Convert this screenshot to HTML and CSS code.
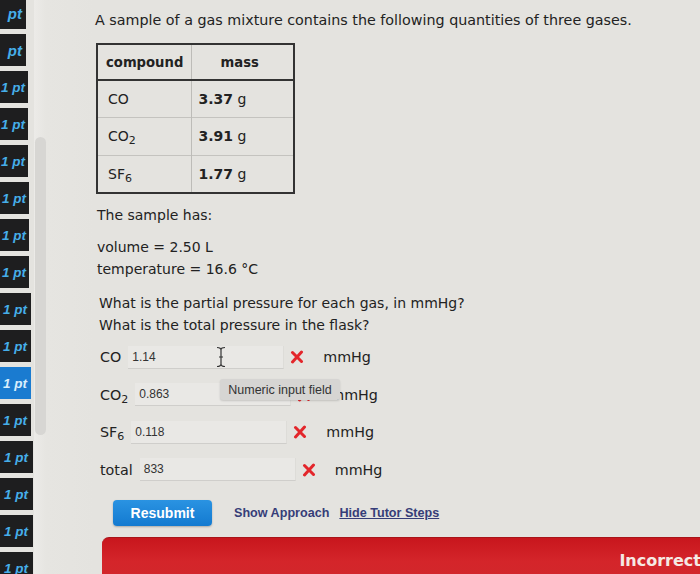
FILE: index.html
```html
<!DOCTYPE html>
<html>
<head>
<meta charset="utf-8">
<link rel="stylesheet" href="styles.css">
</head>
<body>
<div class="page">
  <aside class="rail">
    <div class="tile w1"><span>pt</span></div>
    <div class="tile w1"><span>pt</span></div>
    <div class="tile w2"><span>1 pt</span></div>
    <div class="tile w2"><span>1 pt</span></div>
    <div class="tile w2"><span>1 pt</span></div>
    <div class="tile w3"><span>1 pt</span></div>
    <div class="tile w3"><span>1 pt</span></div>
    <div class="tile w3"><span>1 pt</span></div>
    <div class="tile w4"><span>1 pt</span></div>
    <div class="tile w4"><span>1 pt</span></div>
    <div class="tile w4 active"><span>1 pt</span></div>
    <div class="tile w4"><span>1 pt</span></div>
    <div class="tile w5"><span>1 pt</span></div>
    <div class="tile w5"><span>1 pt</span></div>
    <div class="tile w5"><span>1 pt</span></div>
    <div class="tile w5"><span>1 pt</span></div>
  </aside>
  <div class="gutter"><div class="thumb"></div></div>
  <main class="content">
    <p class="title">A sample of a gas mixture contains the following quantities of three gases.</p>
    <table class="data">
      <thead>
        <tr><th class="c1">compound</th><th class="c2">mass</th></tr>
      </thead>
      <tbody>
        <tr><td>CO</td><td><b>3.37</b> g</td></tr>
        <tr><td>CO<sub>2</sub></td><td><b>3.91</b> g</td></tr>
        <tr><td>SF<sub>6</sub></td><td><b>1.77</b> g</td></tr>
      </tbody>
    </table>
    <p class="para first">The sample has:</p>
    <p class="para gap">volume = 2.50 L</p>
    <p class="para">temperature = 16.6 °C</p>
    <p class="para q gap2">What is the partial pressure for each gas, in mmHg?</p>
    <p class="para q">What is the total pressure in the flask?</p>
    <div class="answers">
      <div class="arow">
        <span class="lbl">CO</span>
        <span class="field">1.14<svg class="ibeam" width="10" height="22" viewBox="0 0 10 22"><path d="M1 1.5 Q5 1.5 5 4 Q5 1.5 9 1.5 M5 4 V18 M1 20.5 Q5 20.5 5 18 Q5 20.5 9 20.5 M3 11 H7" fill="none" stroke="#333" stroke-width="1.2"/></svg></span>
        <svg class="xm" width="14" height="14" viewBox="0 0 14 14"><path d="M2.5 2.5 L11.5 11.5 M11.5 2 L2.5 12" stroke="#e3262b" stroke-width="3" stroke-linecap="round"/></svg>
        <span class="unit">mmHg</span>
      </div>
      <div class="arow">
        <span class="lbl">CO<sub>2</sub></span>
        <span class="field">0.863</span>
        <svg class="xm" width="14" height="14" viewBox="0 0 14 14"><path d="M2.5 2.5 L11.5 11.5 M11.5 2 L2.5 12" stroke="#e3262b" stroke-width="3" stroke-linecap="round"/></svg>
        <span class="unit">mmHg</span>
        <span class="tooltip">Numeric input field</span>
      </div>
      <div class="arow">
        <span class="lbl">SF<sub>6</sub></span>
        <span class="field">0.118</span>
        <svg class="xm" width="14" height="14" viewBox="0 0 14 14"><path d="M2.5 2.5 L11.5 11.5 M11.5 2 L2.5 12" stroke="#e3262b" stroke-width="3" stroke-linecap="round"/></svg>
        <span class="unit">mmHg</span>
      </div>
      <div class="arow">
        <span class="lbl">total</span>
        <span class="field">833</span>
        <svg class="xm" width="14" height="14" viewBox="0 0 14 14"><path d="M2.5 2.5 L11.5 11.5 M11.5 2 L2.5 12" stroke="#e3262b" stroke-width="3" stroke-linecap="round"/></svg>
        <span class="unit">mmHg</span>
      </div>
    </div>
    <div class="actions">
      <button class="resubmit">Resubmit</button>
      <a class="link">Show Approach</a>
      <a class="link under">Hide Tutor Steps</a>
    </div>
    <div class="verdict"><span>Incorrect</span></div>
  </main>
</div>
</body>
</html>
```
FILE: styles.css
```css
* { box-sizing: border-box; }
html, body { margin: 0; padding: 0; }
body {
  width: 700px;
  height: 574px;
  overflow: hidden;
  background: #e4e3df;
  font-family: "DejaVu Sans", Verdana, sans-serif;
  color: #222;
}
.page {
  display: flex;
  height: 574px;
}
.rail {
  width: 34px;
  flex: none;
  display: flex;
  flex-direction: column;
  gap: 5px;
  margin-top: -3px;
}
.tile {
  height: 32px;
  background: #1e1e1f;
  display: flex;
  align-items: center;
  justify-content: flex-end;
  padding-right: 3px;
  flex: none;
}
.tile span {
  font-family: "Liberation Sans", Arial, sans-serif;
  font-weight: bold;
  font-style: italic;
  font-size: 13.5px;
  color: #46aee9;
  white-space: nowrap;
}
.w1 span { font-size: 15px; }
.tile.active { background: #1a7bd0; }
.tile.active span { color: #d8eefc; }
.w1 { width: 26px; padding-right: 4px; }
.w2 { width: 28px; }
.w3 { width: 29px; }
.w4 { width: 31px; padding-right: 4px; }
.w5 { width: 33px; padding-right: 5px; }
.gutter {
  width: 61px;
  flex: none;
  background: linear-gradient(90deg, #ecebe8 0, #e6e5e1 12px, #e4e3df 100%);
}
.thumb {
  margin-top: 137px;
  margin-left: 1px;
  width: 11px;
  height: 298px;
  border-radius: 6px;
  background: #d7d6d3;
}
.content {
  flex: 1;
  min-width: 0;
  padding-top: 9px;
}
p { margin: 0; }
.title {
  font-size: 14.3px;
  line-height: 22px;
  white-space: nowrap;
}
.data {
  margin-top: 12px;
  margin-left: 1px;
  border-collapse: collapse;
  border: 2px solid #333;
  font-size: 14px;
  width: 199px;
}
.data th {
  height: 36px;
  font-size: 13.2px;
  font-weight: bold;
  border-bottom: 2px solid #333;
  border-right: 1px solid #bdbcb8;
}
.data th.c1 { text-align: left; padding-left: 8px; width: 94px; }
.data th.c2 { text-align: center; padding-right: 6px; }
.data td {
  height: 37.5px;
  padding-left: 9px;
  border-top: 1px solid #c4c3bf;
  border-right: 1px solid #bdbcb8;
  vertical-align: middle;
}
.data td:first-child { padding-left: 10px; }
.data td + td { padding-left: 7px; }
sub { font-size: 11px; vertical-align: -3px; line-height: 0; }
.para {
  font-size: 14px;
  line-height: 22px;
  padding-left: 2px;
}
.para.first { margin-top: 10px; }
.para.gap { margin-top: 10px; }
.para.gap2 { margin-top: 12px; }
.para.q { padding-left: 4px; }
.answers {
  margin-top: 3px;
  padding-left: 5px;
}
.arow {
  position: relative;
  height: 37.5px;
  display: flex;
  align-items: center;
  font-size: 14.3px;
}
.lbl { white-space: nowrap; }
.field {
  position: relative;
  margin-left: 7px;
  width: 156px;
  height: 23px;
  background: #e9e8e5;
  border-bottom: 1px solid #cfcecb;
  border-right: 1px solid #dddcd8;
  font-family: "Liberation Sans", Arial, sans-serif;
  font-size: 12px;
  color: #333;
  display: flex;
  align-items: center;
  padding-left: 4px;
}
.ibeam {
  position: absolute;
  left: 88px;
  top: 0;
}
.xm { margin-left: 6px; flex: none; }
.unit { margin-left: 19px; }
.tooltip {
  position: absolute;
  left: 120px;
  top: 3px;
  width: 120px;
  height: 21px;
  background: #d6d5d3;
  border-radius: 3px;
  box-shadow: 0 1px 2px rgba(0,0,0,0.15);
  font-family: "Liberation Sans", Arial, sans-serif;
  font-size: 12.5px;
  color: #333;
  display: flex;
  align-items: center;
  justify-content: center;
}
.actions {
  margin-top: 11px;
  display: flex;
  align-items: center;
  padding-left: 18px;
  font-family: "Liberation Sans", Arial, sans-serif;
}
.resubmit {
  width: 99px;
  height: 26px;
  border: none;
  border-radius: 4px;
  background: linear-gradient(#2a93e2, #137ad0);
  box-shadow: 0 1px 2px rgba(0,0,0,0.25);
  color: #fff;
  font-family: "Liberation Sans", Arial, sans-serif;
  font-weight: bold;
  font-size: 14px;
  padding: 0;
}
.link {
  font-weight: bold;
  font-size: 12.6px;
  color: #363d78;
  margin-left: 22px;
}
.link.under { margin-left: 10px; text-decoration: underline; }
.verdict {
  margin-top: 11px;
  margin-left: 7px;
  height: 40px;
  background: linear-gradient(#c8161d, #d4252a 60%, #d2272b);
  border-top: 1px solid #a8141a;
  border-top-left-radius: 7px;
  display: flex;
  justify-content: flex-end;
  align-items: center;
  padding-top: 6px;
  padding-right: 0;
}
.verdict span {
  font-weight: bold;
  font-size: 16px;
  color: #f5e9e4;
  margin-right: -1px;
}
```
